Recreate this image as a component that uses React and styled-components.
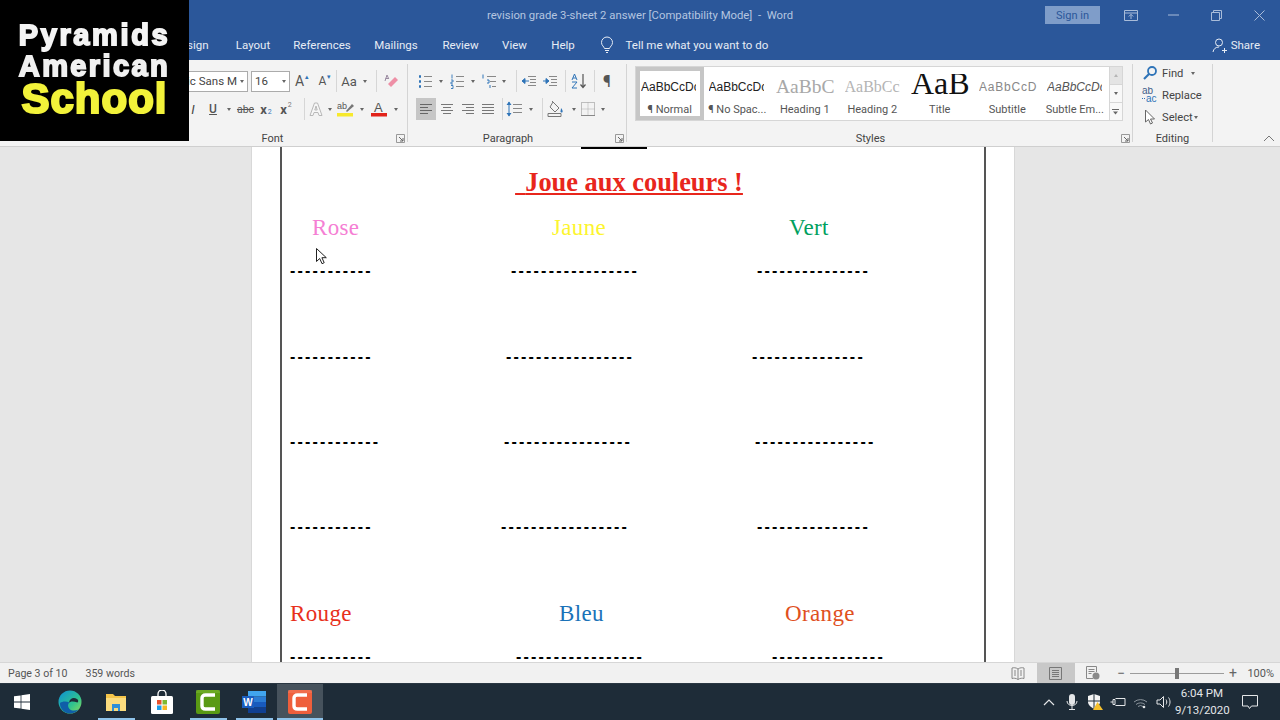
import React from 'react';
import styled, { createGlobalStyle } from 'styled-components';

const Global = createGlobalStyle`
  html, body { margin: 0; padding: 0; background: #e6e6e6; }
  * { box-sizing: border-box; }
`;

const ui = '"Roboto", "Liberation Sans", sans-serif';

const Screen = styled.div`
  position: relative;
  width: 1280px;
  height: 720px;
  overflow: hidden;
  display: flex;
  flex-direction: column;
  font-family: ${ui};
`;

/* logo sitting over the corner of the video */
const Logo = styled.div`
  position: absolute;
  left: 0;
  top: 0;
  width: 189px;
  height: 141px;
  background: #000;
  z-index: 5;
  display: flex;
  flex-direction: column;
  align-items: center;
  padding-top: 20px;
  font-family: "Liberation Sans", Arial, sans-serif;
  font-weight: 700;
`;
const LogoLine = styled.div`
  color: ${p => p.$color};
  font-size: ${p => p.$size}px;
  line-height: ${p => p.$lh}px;
  letter-spacing: ${p => p.$ls}px;
  -webkit-text-stroke: ${p => p.$stroke}px ${p => p.$color};
  filter: blur(0.6px);
`;

const TitleBar = styled.div`
  height: 30px;
  background: #2b579a;
  display: grid;
  grid-template-columns: 1fr auto 1fr;
  align-items: center;
`;
const DocName = styled.div`
  grid-column: 2;
  color: #b5c6e0;
  font-size: 11.3px;
  white-space: pre;
`;
const TitleRight = styled.div`
  grid-column: 3;
  display: flex;
  justify-content: flex-end;
  align-items: center;
  margin-right: -1px;
`;
const SignIn = styled.div`
  width: 55px;
  height: 18px;
  background: #7f9dc9;
  color: #2b579a;
  font-size: 11px;
  display: flex;
  align-items: center;
  justify-content: center;
  margin-right: 9px;
`;
const WinBtn = styled.div`
  width: 43px;
  height: 30px;
  display: flex;
  align-items: center;
  justify-content: center;
`;

const TabBar = styled.div`
  height: 30px;
  background: #2b579a;
  padding-left: 158.5px;
  display: flex;
  align-items: center;
  color: #e6ecf5;
  font-size: 11.5px;
`;
const Tab = styled.div`
  width: ${p => p.$w}px;
  text-align: center;
  white-space: nowrap;
`;
const Bulb = styled.div`
  width: 28px;
  margin-left: 5px;
  display: flex;
  justify-content: center;
`;
const TellMe = styled.div`
  margin-left: 5px;
`;
const Share = styled.div`
  margin-left: auto;
  margin-right: 20px;
  display: flex;
  align-items: center;
  gap: 4px;
`;

const Ribbon = styled.div`
  height: 87px;
  background: #f3f3f3;
  border-bottom: 1px solid #cfcfcf;
  padding: 4px 0;
  display: flex;
  color: #444;
  font-size: 12px;
`;
const Group = styled.div`
  width: ${p => p.$w}px;
  display: flex;
  flex-direction: column;
  border-right: ${p => (p.$plain ? 'none' : '1px solid #d4d4d4')};
`;
const GroupBody = styled.div`
  flex: 1;
  margin-top: ${p => p.$mt || 0}px;
  padding: ${p => p.$top}px 0 0 ${p => p.$left}px;
  display: flex;
  flex-direction: column;
`;
const GroupFoot = styled.div`
  height: 18px;
  margin-bottom: -5px;
  display: flex;
  align-items: center;
  font-size: 11px;
  color: #444;
`;
const GroupName = styled.div`
  flex: 1;
  text-align: center;
  padding-right: ${p => p.$pr || 0}px;
`;
const Launcher = styled.div`
  width: 14px;
  display: flex;
  justify-content: center;
`;
const ToolRow = styled.div`
  display: flex;
  align-items: center;
  height: 22px;
  margin-bottom: 6px;
`;
const Combo = styled.div`
  width: ${p => p.$w}px;
  height: 21px;
  margin-right: ${p => p.$mr}px;
  background: #fff;
  border: 1px solid #ababab;
  display: flex;
  align-items: center;
  justify-content: ${p => (p.$end ? 'flex-end' : 'space-between')};
  gap: 3px;
  padding: 0 3px;
  font-size: 11.5px;
  color: #444;
  white-space: nowrap;
  overflow: hidden;
`;
const Tool = styled.div`
  width: ${p => p.$w}px;
  height: 22px;
  flex: none;
  display: flex;
  align-items: center;
  justify-content: center;
  color: ${p => p.$color || '#555'};
  font-size: ${p => p.$fs || 12}px;
  font-weight: ${p => p.$fw || 400};
  font-style: ${p => p.$fi || 'normal'};
  text-decoration: ${p => p.$td || 'none'};
  background: ${p => (p.$on ? '#c6c6c6' : 'transparent')};
`;
const Caret = styled.span`
  flex: none;
  width: 0;
  height: 0;
  border-left: 2.5px solid transparent;
  border-right: 2.5px solid transparent;
  border-top: 3px solid #666;
`;
const Sep = styled.div`
  width: 1px;
  height: 22px;
  flex: none;
  background: #d6d6d6;
  margin-left: ${p => p.$ml}px;
`;
const Sup = styled.span`
  font-size: 7px;
  font-weight: 400;
  align-self: ${p => p.$up ? 'flex-start' : 'flex-end'};
  margin: ${p => p.$up ? '3px 0 0 1px' : '0 0 4px 1px'};
  color: ${p => p.$c || '#777'};
`;

const Gallery = styled.div`
  width: 488px;
  height: 55px;
  margin: -4px 0 0 8px;
  background: #fff;
  border: 1px solid #d6d6d6;
  display: flex;
`;
const StyleItem = styled.div`
  width: 67.5px;
  flex: none;
  display: flex;
  flex-direction: column;
  align-items: center;
  padding-top: 3px;
  border: ${p => (p.$on ? '4px solid #c6c6c6' : '4px solid transparent')};
  overflow: hidden;
`;
const Preview = styled.div`
  width: ${p => (p.$clip ? `${p.$clip}px` : '100%')};
  height: 26px;
  margin-right: ${p => (p.$clip ? 'auto' : '0')};
  margin-left: ${p => p.$pl ?? 1}px;
  padding-bottom: ${p => p.$pb || 0}px;
  overflow: hidden;
  white-space: nowrap;
  display: flex;
  align-items: center;
  justify-content: ${p => (p.$center ? 'center' : 'flex-start')};
  font-family: ${p => (p.$serif ? '"Liberation Serif", serif' : '"Liberation Sans", sans-serif')};
  font-size: ${p => p.$fs}px;
  font-style: ${p => (p.$it ? 'italic' : 'normal')};
  letter-spacing: ${p => p.$ls || 0}px;
  color: ${p => p.$color};
`;
const StyleName = styled.div`
  font-size: 11px;
  color: #555;
  margin-top: 3px;
  white-space: nowrap;
`;
const GalleryScroll = styled.div`
  width: 13px;
  flex: none;
  display: flex;
  flex-direction: column;
  border-left: 1px solid #d6d6d6;
`;
const ScrollBtn = styled.div`
  flex: 1;
  display: flex;
  flex-direction: column;
  gap: 1px;
  align-items: center;
  justify-content: center;
  background: ${p => (p.$off ? '#e4e4e4' : '#f8f8f8')};
  & + & { border-top: 1px solid #d6d6d6; }
`;
const EditRow = styled.div`
  height: 22px;
  display: flex;
  align-items: center;
  font-size: 11.2px;
  color: #444;
`;
const EditIcon = styled.div`
  width: 18px;
  margin-right: 3px;
  display: flex;
  justify-content: center;
`;
const EditCaret = styled.div`
  margin-left: ${p => p.$ml}px;
  display: flex;
`;
const Collapse = styled.div`
  margin-left: auto;
  margin-right: 5px;
  align-self: flex-end;
  display: flex;
`;

const Workspace = styled.div`
  height: 515px;
  background: #e6e6e6;
  overflow: hidden;
  padding-left: 251px;
`;
const Page = styled.div`
  width: 764px;
  height: 515px;
  background: #fff;
  border-left: 1px solid #d8d8d8;
  border-right: 1px solid #d8d8d8;
  padding-left: 28px;
`;
const Frame = styled.div`
  width: 706px;
  height: 515px;
  border-left: 2px solid #555;
  border-right: 2px solid #555;
  padding: 0 7px 0 8px;
  overflow: hidden;
`;
const Stub = styled.div`
  width: 66px;
  height: 2px;
  background: #000;
  margin-left: 291px;
`;
const Heading = styled.div`
  height: 32px;
  margin-top: 17px;
  padding-right: 9px;
  text-align: center;
  font-family: "Liberation Serif", serif;
  font-weight: 700;
  font-size: 26.4px;
  line-height: 32px;
  color: #e8261c;
  text-decoration: underline;
  text-decoration-thickness: 2px;
  text-underline-offset: 2px;
  white-space: pre;
`;
const LeadGap = styled.span`
  letter-spacing: 3.5px;
`;
const Row = styled.div`
  display: grid;
  grid-template-columns: 210px 250px 1fr;
  height: 44px;
  align-items: center;
  margin-top: ${p => p.$mt}px;
`;
const Word = styled.div`
  padding-left: ${p => p.$x}px;
  padding-top: 2px;
  font-family: "Liberation Serif", serif;
  font-size: 23px;
  letter-spacing: 0.35px;
  color: ${p => p.$color};
`;
const Dashes = styled.div`
  padding-left: ${p => p.$x}px;
  font-family: "Liberation Sans", sans-serif;
  font-weight: 700;
  font-size: 16px;
  letter-spacing: 2.2px;
  color: #000;
  white-space: nowrap;
`;

const Pointer = styled.svg`
  position: absolute;
  left: 315px;
  top: 247px;
  z-index: 4;
`;

const StatusBar = styled.div`
  height: 21px;
  background: #f1f1f1;
  border-top: 1px solid #d6d6d6;
  display: flex;
  align-items: center;
  font-size: 10.6px;
  color: #555;
`;
const StatusText = styled.div`
  margin-left: ${p => p.$ml}px;
`;
const StatusRight = styled.div`
  margin-left: auto;
  display: flex;
  align-items: center;
  height: 100%;
`;
const ViewBtn = styled.div`
  width: 37.5px;
  height: 100%;
  display: flex;
  align-items: center;
  justify-content: center;
  background: ${p => (p.$on ? '#c8c8c8' : 'transparent')};
`;
const ZoomBtn = styled.div`
  width: 18px;
  text-align: center;
  font-size: 14px;
  line-height: 18px;
  color: #666;
`;
const Slider = styled.div`
  position: relative;
  width: 94px;
  height: 1px;
  background: #9c9c9c;
`;
const Thumb = styled.div`
  position: absolute;
  left: 45px;
  top: -5px;
  width: 4px;
  height: 11px;
  background: #777;
`;
const ZoomPct = styled.div`
  width: 38px;
  padding-right: 6px;
  text-align: right;
  font-size: 11px;
`;

const Taskbar = styled.div`
  height: 37px;
  background: #1e2c38;
  border-top: 1px solid #2a3742;
  display: flex;
  align-items: center;
`;
const TaskBtn = styled.div`
  position: relative;
  width: ${p => p.$w}px;
  height: 100%;
  flex: none;
  display: flex;
  align-items: center;
  justify-content: center;
  background: ${p => (p.$hover ? '#46525c' : 'transparent')};
  &::after {
    content: '';
    display: ${p => (p.$open ? 'block' : 'none')};
    position: absolute;
    left: ${p => (p.$hover ? 0 : 5)}px;
    right: ${p => (p.$hover ? 0 : 4)}px;
    bottom: 0;
    height: 2px;
    background: #8fc3ea;
  }
`;
const Tray = styled.div`
  margin-left: auto;
  padding-right: 9px;
  height: 100%;
  display: flex;
  align-items: center;
`;
const TrayBtn = styled.div`
  width: ${p => p.$w}px;
  display: flex;
  justify-content: center;
`;
const Clock = styled.div`
  width: 54px;
  color: #e4e6e8;
  font-size: 11.5px;
  line-height: 17px;
  text-align: center;
`;

/* ---- small drawings ---- */
const Svg = ({ w = 16, h = 16, children, vb }) => (
  <svg width={w} height={h} viewBox={vb || `0 0 ${w} ${h}`} fill="none">{children}</svg>
);
const Lines = ({ rows, color = '#777' }) => (
  <Svg>
    {rows.map(([a, b, y], i) => <path key={i} d={`M${a} ${y}H${b}`} stroke={color} />)}
  </Svg>
);
const Bullets = () => (
  <Svg>
    <path d="M7 3.5h8M7 8.5h8M7 13.5h8" stroke="#888" />
    <path d="M2 3.5h2M2 8.5h2M2 13.5h2" stroke="#2f74b8" strokeWidth="2.4" />
  </Svg>
);
const Numbers = () => (
  <Svg>
    <path d="M7 3.5h8M7 8.5h8M7 13.5h8" stroke="#888" />
    <path d="M3 1.5v4M2 7h2v2H2v2h2M2 12.5h2v3H2" stroke="#2f74b8" strokeWidth=".9" />
  </Svg>
);
const Multi = () => (
  <Svg>
    <path d="M6 3.5h9M9 8.5h6M11 13.5h4" stroke="#888" />
    <path d="M2 1.5v4M6 7h2v3H6M9 12v3" stroke="#2f74b8" />
  </Svg>
);
const Indent = ({ flip }) => (
  <Svg>
    <path d="M7 3.5h8M9 6.5h6M9 9.5h6M7 12.5h8" stroke="#888" />
    <path d={flip ? 'M1 8h4M4 5.5l3 2.5-3 2.5z' : 'M4 8h4M4 5.5L1 8l3 2.5z'} stroke="#2f74b8" fill="#2f74b8" />
  </Svg>
);
const Sort = () => (
  <svg width="18" height="18" viewBox="0 0 18 18" fill="none">
    <path d="M2 8l2.5-6L7 8M3 6h3M2 10h5l-5 6h5" stroke="#2f74b8" />
    <path d="M13 2v13M10.5 12.5l2.5 3 2.5-3" stroke="#555" strokeWidth="1.2" />
  </svg>
);
const LineSpacing = () => (
  <svg width="18" height="18" viewBox="0 0 18 18" fill="none">
    <path d="M8 4.5h9M8 8.5h9M8 12.5h9" stroke="#888" />
    <path d="M4 2v14" stroke="#2f74b8" />
    <path d="M1.500 5L4 1.500 6.500 5zM1.500 13L4 16.500 6.500 13z" fill="#2f74b8" />
  </svg>
);
const Shading = () => (
  <svg width="20" height="18" viewBox="0 0 20 18" fill="none">
    <path d="M6 2l6 6-4 4-5-5zM5 2l1-1" stroke="#777" />
    <path d="M14 8c1.500 2 2 3 1.500 4s-2 .5-2-.5.500-2 .5-3.500z" fill="#2f74b8" />
    <path d="M1 13.500h13v3H1z" stroke="#777" />
  </svg>
);
const Borders = () => (
  <Svg>
    <path d="M1.500 1.500h13v13h-13z" stroke="#888" strokeDasharray="1 1" />
    <path d="M8 1.500v13M1.500 8h13" stroke="#aaa" strokeDasharray="1 1" />
    <path d="M1 14.500h14" stroke="#888" />
  </Svg>
);
const Eraser = () => (
  <svg width="18" height="18" viewBox="0 0 18 18" fill="none">
    <path d="M9 15l7-7-3-3-7 7z" fill="#ee8fa6" />
    <path d="M3 9l2-6 1.800 4M3.500 6.500h3" stroke="#9a8aa0" />
  </svg>
);
const OutlineA = () => (
  <svg width="16" height="16" viewBox="0 0 16 16" fill="none">
    <path d="M2 14.500L6.500 2h3L14 14.500h-3l-1-3H6l-1 3zM6.800 9h2.400L8 5z" stroke="#b8b8b8" fill="#f7f7f7" />
  </svg>
);
const Highlight = () => (
  <svg width="20" height="18" viewBox="0 0 20 18" fill="none">
    <text x="1" y="9" fontSize="9" fontFamily="Liberation Sans" fill="#555">ab</text>
    <path d="M10 11l6-7 2 2-7 6z" fill="#777" />
    <rect x="1" y="13" width="16" height="3.500" fill="#f7e92c" />
  </svg>
);
const FontColor = () => (
  <svg width="18" height="18" viewBox="0 0 18 18" fill="none">
    <text x="4" y="12" fontSize="13" fontFamily="Liberation Sans" fill="#555">A</text>
    <rect x="1" y="13" width="16" height="3.500" fill="#e2231a" />
  </svg>
);
const Corner = () => (
  <svg width="9" height="9" viewBox="0 0 9 9" fill="none">
    <path d="M.5 8.500V.5h8v8z" stroke="#999" />
    <path d="M3 3l4 4M7 4v3H4" stroke="#666" />
  </svg>
);
const Magnifier = () => (
  <Svg>
    <circle cx="10" cy="6" r="4" stroke="#2f74b8" strokeWidth="1.800" />
    <path d="M7 9l-5 5" stroke="#2f74b8" strokeWidth="2.200" />
  </Svg>
);
const ReplaceIcon = () => (
  <svg width="18" height="16" viewBox="0 0 18 16" fill="none">
    <text x="1" y="7" fontSize="10" fontFamily="Liberation Sans" fill="#44608a">ab</text>
    <text x="5" y="15" fontSize="10" fontFamily="Liberation Sans" fill="#2f74b8">ac</text>
    <path d="M1 11.500h3" stroke="#2f74b8" strokeDasharray="1 1" />
  </svg>
);
const Arrow = () => (
  <svg width="12" height="16" viewBox="0 0 12 16" fill="none">
    <path d="M1.500 1v12l3-2.500 2 4.500 2-1-2-4h4z" stroke="#666" fill="#fff" />
  </svg>
);

const WinLogo = () => (
  <svg width="16" height="16" viewBox="0 0 16 16" fill="#fff">
    <path d="M0 2.300L6.600 1.400v6.200H0zM7.400 1.300L16 0v7.600H7.400zM0 8.400h6.600v6.200L0 13.700zM7.400 8.400H16V16l-8.600-1.300z" />
  </svg>
);
const Edge = () => (
  <svg width="24" height="24" viewBox="0 0 24 24">
    <defs>
      <linearGradient id="edgeTop" x1="0" y1="0" x2="1" y2="1">
        <stop offset="0" stopColor="#0c8fd8" />
        <stop offset=".6" stopColor="#2fc28f" />
        <stop offset="1" stopColor="#8fdc5a" />
      </linearGradient>
    </defs>
    <circle cx="12" cy="12" r="11.500" fill="url(#edgeTop)" />
    <path d="M2 13c-.5 6 5 11 11 10.500 3-.3 6-2 7.500-4-3 1.500-7 1.500-9-.5-2-2-2-5 0-6.500-3-1.500-7-1.500-9.500.5z" fill="#0f5ea8" />
    <path d="M11 13c1-1.500 4-2 8.500-.5 1-.7 1-2.500-.5-3.500-3-2-7.500-1-8 4z" fill="#1e2c38" />
  </svg>
);
const Folder = () => (
  <svg width="22" height="20" viewBox="0 0 22 20">
    <path d="M1 2h7l2 2h11v15H1z" fill="#f5c54a" />
    <path d="M1 6h20v13H1z" fill="#fbdc7e" />
    <path d="M7 12h8v7h-2v-3H9v3H7z" fill="#2f8fd8" />
  </svg>
);
const Store = () => (
  <svg width="22" height="24" viewBox="0 0 22 24" fill="none">
    <path d="M7 7V4a4 4 0 018 0v3" stroke="#fff" strokeWidth="1.300" />
    <rect x="0" y="6" width="22" height="18" rx="1.500" fill="#fff" />
    <rect x="6" y="10" width="4.500" height="4.500" fill="#e8502a" />
    <rect x="11.500" y="10" width="4.500" height="4.500" fill="#7fba30" />
    <rect x="6" y="15.500" width="4.500" height="4.500" fill="#1b9ee8" />
    <rect x="11.500" y="15.500" width="4.500" height="4.500" fill="#f8b820" />
  </svg>
);
const Camtasia = ({ bg, edge }) => (
  <svg width="24" height="24" viewBox="0 0 24 24" fill="none">
    <rect width="24" height="24" rx="2" fill={bg} />
    <path d="M19 5H9.500C7 5 6 6.500 6 8v8c0 1.500 1 3 3.500 3H19" stroke="#fff" strokeWidth="3.400" fill="none" />
    <path d="M0 0h24v3H0z" fill={edge} opacity=".35" />
  </svg>
);
const WordIcon = () => (
  <svg width="24" height="22" viewBox="0 0 24 22">
    <rect x="6" y="0" width="18" height="5.500" fill="#41a5ee" />
    <rect x="6" y="5.500" width="18" height="5.500" fill="#2b7cd3" />
    <rect x="6" y="11" width="18" height="5.500" fill="#185abd" />
    <rect x="6" y="16.500" width="18" height="5.500" fill="#103f91" />
    <rect x="0" y="5" width="12" height="12" fill="#1a5dbf" />
    <text x="6" y="14.500" textAnchor="middle" fontSize="10" fontWeight="700" fontFamily="Liberation Sans" fill="#fff">W</text>
  </svg>
);

const App = () => {
  const previews = [
    { name: '¶ Normal', text: 'AaBbCcDc', fs: 12, color: '#222', on: true, clip: 55 },
    { name: '¶ No Spac...', text: 'AaBbCcDc', fs: 12, color: '#222', clip: 55 },
    { name: 'Heading 1', text: 'AaBbC', fs: 19.5, color: '#a8a8a8', serif: true, center: true },
    { name: 'Heading 2', text: 'AaBbCcl', fs: 16, color: '#b4b4b4', serif: true, pl: 2, clip: 55 },
    { name: 'Title', text: 'AaB', fs: 32, color: '#111', serif: true, center: true, pb: 8 },
    { name: 'Subtitle', text: 'AaBbCcD', fs: 12, color: '#888', ls: 0.8, pl: 3 },
    { name: 'Subtle Em...', text: 'AaBbCcDc', fs: 12, color: '#555', it: true, pl: 2, clip: 55 },
  ];
  const rows = [
    { mt: 0, cells: [[0, 11], [11, 17], [7, 15]] },
    { mt: 42, cells: [[0, 11], [6, 17], [2, 15]] },
    { mt: 41, cells: [[0, 12], [4, 17], [5, 16]] },
    { mt: 41, cells: [[0, 11], [1, 17], [7, 15]] },
  ];

  return (
    <Screen>
      <Global />
      <Logo>
        <LogoLine $color="#f4f4f4" $size={29} $lh={31} $ls={2.6} $stroke={1.8}>Pyramids</LogoLine>
        <LogoLine $color="#f0f0f0" $size={29} $lh={30} $ls={2.4} $stroke={1.8}>American</LogoLine>
        <LogoLine $color="#f2f23a" $size={42} $lh={36} $ls={1} $stroke={2.2}>School</LogoLine>
      </Logo>

      <TitleBar>
        <DocName>{'revision grade 3-sheet 2 answer [Compatibility Mode]  -  Word'}</DocName>
        <TitleRight>
          <SignIn>Sign in</SignIn>
          <WinBtn>
            <svg width="14" height="11" viewBox="0 0 14 11" fill="none">
              <path d="M.5.500h13v10H.5zM.5 3h13M7 9V4.500M4.800 6.500L7 4.300l2.200 2.200" stroke="#a9bcd9" />
            </svg>
          </WinBtn>
          <WinBtn>
            <svg width="11" height="2" viewBox="0 0 11 2"><path d="M0 1h11" stroke="#a9bcd9" /></svg>
          </WinBtn>
          <WinBtn>
            <svg width="11" height="11" viewBox="0 0 11 11" fill="none">
              <path d="M.5 2.500h8v8h-8zM2.500 2.500v-2h8v8h-2" stroke="#a9bcd9" />
            </svg>
          </WinBtn>
          <WinBtn>
            <svg width="11" height="11" viewBox="0 0 11 11" fill="none">
              <path d="M.5.500l10 10M10.500.5l-10 10" stroke="#a9bcd9" />
            </svg>
          </WinBtn>
        </TitleRight>
      </TitleBar>

      <TabBar>
        <Tab $w={65}>Design</Tab>
        <Tab $w={59}>Layout</Tab>
        <Tab $w={79}>References</Tab>
        <Tab $w={69}>Mailings</Tab>
        <Tab $w={60}>Review</Tab>
        <Tab $w={48}>View</Tab>
        <Tab $w={49}>Help</Tab>
        <Bulb>
          <svg width="14" height="18" viewBox="0 0 14 18" fill="none">
            <path d="M4.500 12.500C4 10.500 1.500 9.500 1.500 6.500a5.500 5.500 0 0111 0c0 3-2.500 4-3 6zM5 14.500h4M6 16.500h2" stroke="#e6ecf5" />
          </svg>
        </Bulb>
        <TellMe>Tell me what you want to do</TellMe>
        <Share>
          <svg width="15" height="15" viewBox="0 0 15 15" fill="none">
            <circle cx="7" cy="4.500" r="3.500" stroke="#e6ecf5" />
            <path d="M1 14c.5-3 2.500-5 6-5M10 12.500h5M12.500 10v5" stroke="#e6ecf5" />
          </svg>
          Share
        </Share>
      </TabBar>

      <Ribbon>
        <Group $w={154} $plain />

        <Group $w={254}>
          <GroupBody $top={6} $left={8}>
            <ToolRow>
              <Combo $w={86} $mr={3} $end>Comic Sans M<Caret /></Combo>
              <Combo $w={39} $mr={0}>16<Caret /></Combo>
              <Tool $w={24} $fs={14}>A<Sup $up $c="#2f74b8">▴</Sup></Tool>
              <Tool $w={22} $fs={12}>A<Sup $up $c="#2f74b8">▾</Sup></Tool>
              <Sep $ml={0} />
              <Tool $w={24} $fs={13}>Aa</Tool>
              <Tool $w={8}><Caret /></Tool>
              <Sep $ml={7} />
              <Tool $w={28}><Eraser /></Tool>
            </ToolRow>
            <ToolRow>
              <Tool $w={21} />
              <Tool $w={20} $fs={13} $fi="italic" $color="#444">I</Tool>
              <Tool $w={20} $fs={12} $fw={500} $td="underline">U</Tool>
              <Tool $w={12}><Caret /></Tool>
              <Tool $w={21} $fs={10.5} $td="line-through">abc</Tool>
              <Tool $w={20} $fs={13} $fw={700}>x<Sup $c="#2f74b8">2</Sup></Tool>
              <Tool $w={20} $fs={13} $fw={700}>x<Sup $up>2</Sup></Tool>
              <Sep $ml={8} />
              <Tool $w={22}><OutlineA /></Tool>
              <Tool $w={6}><Caret /></Tool>
              <Tool $w={26}><Highlight /></Tool>
              <Tool $w={6}><Caret /></Tool>
              <Tool $w={28}><FontColor /></Tool>
              <Tool $w={6}><Caret /></Tool>
            </ToolRow>
          </GroupBody>
          <GroupFoot>
            <GroupName $pr={2}>Font</GroupName>
            <Launcher><Corner /></Launcher>
          </GroupFoot>
        </Group>

        <Group $w={219}>
          <GroupBody $top={6} $left={8}>
            <ToolRow>
              <Tool $w={18}><Bullets /></Tool>
              <Tool $w={14}><Caret /></Tool>
              <Tool $w={18}><Numbers /></Tool>
              <Tool $w={14}><Caret /></Tool>
              <Tool $w={18}><Multi /></Tool>
              <Tool $w={12}><Caret /></Tool>
              <Sep $ml={6} />
              <Tool $w={24}><Indent /></Tool>
              <Tool $w={18}><Indent flip /></Tool>
              <Sep $ml={6} />
              <Tool $w={26}><Sort /></Tool>
              <Sep $ml={2} />
              <Tool $w={24} $fs={16}>¶</Tool>
            </ToolRow>
            <ToolRow>
              <Tool $w={20} $on><Lines color="#666" rows={[[2, 14, 3.5], [2, 10, 6.5], [2, 14, 9.5], [2, 10, 12.5]]} /></Tool>
              <Tool $w={21}><Lines rows={[[2, 14, 3.5], [4, 12, 6.5], [2, 14, 9.5], [4, 12, 12.5]]} /></Tool>
              <Tool $w={21}><Lines rows={[[2, 14, 3.5], [6, 14, 6.5], [2, 14, 9.5], [6, 14, 12.5]]} /></Tool>
              <Tool $w={20}><Lines rows={[[2, 14, 3.5], [2, 14, 6.5], [2, 14, 9.5], [2, 14, 12.5]]} /></Tool>
              <Sep $ml={4} />
              <Tool $w={22}><LineSpacing /></Tool>
              <Tool $w={12}><Caret /></Tool>
              <Sep $ml={5} />
              <Tool $w={28}><Shading /></Tool>
              <Tool $w={6}><Caret /></Tool>
              <Tool $w={22}><Borders /></Tool>
              <Tool $w={8}><Caret /></Tool>
            </ToolRow>
          </GroupBody>
          <GroupFoot>
            <GroupName $pr={4}>Paragraph</GroupName>
            <Launcher><Corner /></Launcher>
          </GroupFoot>
        </Group>

        <Group $w={506}>
          <GroupBody $top={6} $left={0}>
            <Gallery>
              {previews.map(s => (
                <StyleItem key={s.name} $on={s.on}>
                  <Preview $fs={s.fs} $color={s.color} $serif={s.serif} $center={s.center} $it={s.it} $ls={s.ls} $pl={s.pl} $clip={s.clip} $pb={s.pb}>{s.text}</Preview>
                  <StyleName>{s.name}</StyleName>
                </StyleItem>
              ))}
              <GalleryScroll>
                <ScrollBtn $off><Caret style={{ transform: 'rotate(180deg)', borderTopColor: '#b5b5b5' }} /></ScrollBtn>
                <ScrollBtn><Caret /></ScrollBtn>
                <ScrollBtn>
                  <svg width="7" height="6" viewBox="0 0 7 6"><path d="M0 .5h7" stroke="#666" /><path d="M1 2.500h5L3.500 5.500z" fill="#666" /></svg>
                </ScrollBtn>
              </GalleryScroll>
            </Gallery>
          </GroupBody>
          <GroupFoot>
            <GroupName $pr={4}>Styles</GroupName>
            <Launcher><Corner /></Launcher>
          </GroupFoot>
        </Group>

        <Group $w={80}>
          <GroupBody $top={0} $left={8} $mt={-2}>
            <EditRow><EditIcon><Magnifier /></EditIcon>Find<EditCaret $ml={8}><Caret /></EditCaret></EditRow>
            <EditRow><EditIcon><ReplaceIcon /></EditIcon>Replace</EditRow>
            <EditRow><EditIcon><Arrow /></EditIcon>Select<EditCaret $ml={1}><Caret /></EditCaret></EditRow>
          </GroupBody>
          <GroupFoot><GroupName>Editing</GroupName></GroupFoot>
        </Group>

        <Collapse>
          <svg width="12" height="7" viewBox="0 0 12 7" fill="none"><path d="M1 6l5-5 5 5" stroke="#777" /></svg>
        </Collapse>
      </Ribbon>

      <Workspace>
        <Page>
          <Frame>
            <Stub />
            <Heading><LeadGap>{' '}</LeadGap>Joue aux couleurs !</Heading>
            <Row $mt={7}>
              <Word $x={22} $color="#f57fd4">Rose</Word>
              <Word $x={52} $color="#fdf52e">Jaune</Word>
              <Word $x={39} $color="#00a05e">Vert</Word>
            </Row>
            {rows.map((r, i) => (
              <Row key={i} $mt={r.mt}>
                {r.cells.map(([x, n], j) => <Dashes key={j} $x={x}>{'-'.repeat(n)}</Dashes>)}
              </Row>
            ))}
            <Row $mt={42}>
              <Word $x={0} $color="#e8301c">Rouge</Word>
              <Word $x={59} $color="#1a72b8">Bleu</Word>
              <Word $x={35} $color="#e0501e">Orange</Word>
            </Row>
            <Row $mt={0}>
              <Dashes $x={0}>{'-'.repeat(11)}</Dashes>
              <Dashes $x={16}>{'-'.repeat(17)}</Dashes>
              <Dashes $x={22}>{'-'.repeat(15)}</Dashes>
            </Row>
          </Frame>
        </Page>
      </Workspace>

      <Pointer width="14" height="18" viewBox="0 0 14 18" fill="none">
        <path d="M1.500 1.500v13l3.200-3 2.300 5.200 2.200-1-2.300-5h4.400z" fill="#fff" stroke="#222" />
      </Pointer>

      <StatusBar>
        <StatusText $ml={8}>Page 3 of 10</StatusText>
        <StatusText $ml={18}>359 words</StatusText>
        <StatusRight>
          <ViewBtn>
            <svg width="14" height="13" viewBox="0 0 14 13" fill="none">
              <path d="M7 2C5 .5 2.500.5 1 1v10.500c1.500-.5 4-.5 6 1 2-1.500 4.500-1.500 6-1V1c-1.500-.5-4-.5-6 1zM7 2v10.500M3 4h2M3 6h2M3 8h2M9 4h2M9 6h2M9 8h2" stroke="#888" />
            </svg>
          </ViewBtn>
          <ViewBtn $on>
            <svg width="13" height="13" viewBox="0 0 13 13" fill="none">
              <path d="M.5.500h12v12H.5zM3 3.500h7M3 5.500h7M3 7.500h7M3 9.500h7" stroke="#777" />
            </svg>
          </ViewBtn>
          <ViewBtn>
            <svg width="14" height="14" viewBox="0 0 14 14" fill="none">
              <path d="M7 12.500H.5v-12h10V6M2.500 3.500h6M2.500 5.500h6M2.500 7.500h3" stroke="#888" />
              <circle cx="10" cy="10" r="3.500" fill="#8a8a8a" />
            </svg>
          </ViewBtn>
          <ZoomBtn>−</ZoomBtn>
          <Slider><Thumb /></Slider>
          <ZoomBtn>+</ZoomBtn>
          <ZoomPct>100%</ZoomPct>
        </StatusRight>
      </StatusBar>

      <Taskbar>
        <TaskBtn $w={44}><WinLogo /></TaskBtn>
        <TaskBtn $w={3} />
        <TaskBtn $w={46}><Edge /></TaskBtn>
        <TaskBtn $w={46} $open><Folder /></TaskBtn>
        <TaskBtn $w={46}><Store /></TaskBtn>
        <TaskBtn $w={46} $open><Camtasia bg="#5a9a14" edge="#8cc63f" /></TaskBtn>
        <TaskBtn $w={46} $open><WordIcon /></TaskBtn>
        <TaskBtn $w={46} $open $hover><Camtasia bg="#ef5f3c" edge="#f58a6c" /></TaskBtn>
        <Tray>
          <TrayBtn $w={23}>
            <svg width="12" height="7" viewBox="0 0 12 7" fill="none"><path d="M1 6l5-5 5 5" stroke="#e4e6e8" strokeWidth="1.200" /></svg>
          </TrayBtn>
          <TrayBtn $w={23}>
            <svg width="12" height="17" viewBox="0 0 12 17" fill="none">
              <rect x="3" y="0" width="6" height="11" rx="3" fill="#e4e6e8" />
              <path d="M1 7c0 6 10 6 10 0M6 12v3M3 15.500h6" stroke="#e4e6e8" />
            </svg>
          </TrayBtn>
          <TrayBtn $w={23}>
            <svg width="16" height="16" viewBox="0 0 16 16">
              <path d="M1 2l6-2 6 2v6c0 3-3 5-6 7-3-2-6-4-6-7z" fill="#f4f4f4" />
              <path d="M7 0v15M1 7h12" stroke="#1e2c38" />
              <path d="M10.500 8L16 16H6z" fill="#f5c02c" />
            </svg>
          </TrayBtn>
          <TrayBtn $w={23}>
            <svg width="16" height="12" viewBox="0 0 16 12" fill="none">
              <path d="M5.500 2.500H15v7H5.500M.5 6H3M3 3.500h2v5H3z" stroke="#e4e6e8" />
            </svg>
          </TrayBtn>
          <TrayBtn $w={23}>
            <svg width="15" height="13" viewBox="0 0 15 13" fill="none">
              <path d="M1 6a10 10 0 0113 0M3 8.500a7 7 0 019 0M5 10.500a4 4 0 015 0" stroke="#8b949c" />
              <circle cx="11" cy="11" r="1.300" fill="#e4e6e8" />
            </svg>
          </TrayBtn>
          <TrayBtn $w={23}>
            <svg width="16" height="14" viewBox="0 0 16 14" fill="none">
              <path d="M1 5h3l3.500-3.500v11L4 9H1zM10 4.500c1 1.500 1 3.500 0 5M12.500 2.500c2 2.500 2 6.500 0 9" stroke="#e4e6e8" />
            </svg>
          </TrayBtn>
          <Clock>6:04 PM<br />9/13/2020</Clock>
          <TrayBtn $w={42}>
            <svg width="16" height="15" viewBox="0 0 16 15" fill="none">
              <path d="M.5.500h15V11H9.500L7.500 13.500 6 11H.5z" stroke="#e4e6e8" />
            </svg>
          </TrayBtn>
        </Tray>
      </Taskbar>
    </Screen>
  );
};

export default App;
